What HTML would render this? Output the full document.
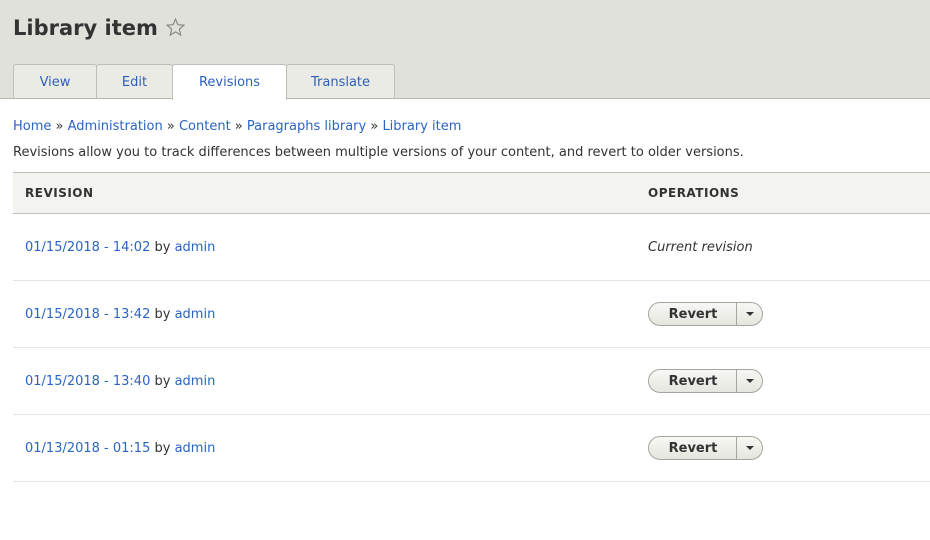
<!DOCTYPE html>
<html><head><style>
body{margin:0;width:930px;height:540px;background:#fff;font-family:"DejaVu Sans","Liberation Sans",sans-serif;color:#333;position:relative;overflow:hidden}
.hdr{position:absolute;left:0;top:0;width:930px;height:98px;background:#e0e1da;border-bottom:1px solid #b5b5b0}
h1{position:absolute;left:13px;top:16px;margin:0;font-size:21px;font-weight:bold;color:#333}
.star{position:absolute;left:165px;top:17px}
.tab{position:absolute;top:64px;height:34px;background:#ebebe6;border:1px solid #bfbfba;border-bottom:none;border-radius:3px 3px 0 0;font-size:13px;color:#2f5fb8;text-align:center;line-height:36px;box-sizing:border-box}
.tab.a{background:#fff;top:64px;height:36px;border-color:#bfbfba}
a,.l{color:#2a64c5;text-decoration:none}
.bc{position:absolute;left:13px;top:119px;font-size:13px}
.desc{position:absolute;left:13px;top:145px;font-size:13px}
.th{position:absolute;left:13px;top:172px;width:917px;height:40px;background:#f3f3f0;border-top:1px solid #bfbfba;border-bottom:1px solid #bfbfba;font-size:12px;font-weight:bold;letter-spacing:.5px;color:#333}
.row{position:absolute;left:13px;width:917px;height:66px;border-bottom:1px solid #e6e4df;font-size:13px}
.row .d{position:absolute;left:12px;top:26px}
.row .o{position:absolute;left:635px;top:26px;font-style:italic}
.btn{position:absolute;left:635px;top:21px;width:115px;height:24px;border:1px solid #a6a6a0;border-radius:12px;background:linear-gradient(#f7f7f4,#e6e6e0);box-sizing:border-box}
.btn b{position:absolute;left:0;width:88px;top:4px;text-align:center;font-size:13px;color:#333}
.btn i{position:absolute;left:87px;top:0;width:1px;height:22px;background:#a6a6a0}
.btn s{position:absolute;left:97px;top:9px;border-left:4px solid transparent;border-right:4px solid transparent;border-top:4px solid #333}
</style></head><body>
<div class="hdr">
<h1>Library item</h1>
<svg class="star" width="21" height="21" viewBox="0 0 24 24"><path d="M12 2.5l2.8 6.3 6.8.6-5.2 4.5 1.6 6.7L12 17l-6 3.6 1.6-6.7L2.4 9.4l6.8-.6z" fill="none" stroke="#868680" stroke-width="1.3"/></svg>
<div class="tab" style="left:13px;width:84px">View</div>
<div class="tab" style="left:96px;width:77px">Edit</div>
<div class="tab a" style="left:172px;width:115px">Revisions</div>
<div class="tab" style="left:286px;width:109px">Translate</div>
</div>
<div class="bc"><a>Home</a> » <a>Administration</a> » <a>Content</a> » <a>Paragraphs library</a> » <a>Library item</a></div>
<div class="desc">Revisions allow you to track differences between multiple versions of your content, and revert to older versions.</div>
<div class="th"><span style="position:absolute;left:12px;top:13px">REVISION</span><span style="position:absolute;left:635px;top:13px">OPERATIONS</span></div>
<div class="row" style="top:214px"><span class="d"><a>01/15/2018 - 14:02</a> by <a>admin</a></span><span class="o">Current revision</span></div>
<div class="row" style="top:281px"><span class="d"><a>01/15/2018 - 13:42</a> by <a>admin</a></span><div class="btn"><b>Revert</b><i></i><s></s></div></div>
<div class="row" style="top:348px"><span class="d"><a>01/15/2018 - 13:40</a> by <a>admin</a></span><div class="btn"><b>Revert</b><i></i><s></s></div></div>
<div class="row" style="top:415px"><span class="d"><a>01/13/2018 - 01:15</a> by <a>admin</a></span><div class="btn"><b>Revert</b><i></i><s></s></div></div>
</body></html>
